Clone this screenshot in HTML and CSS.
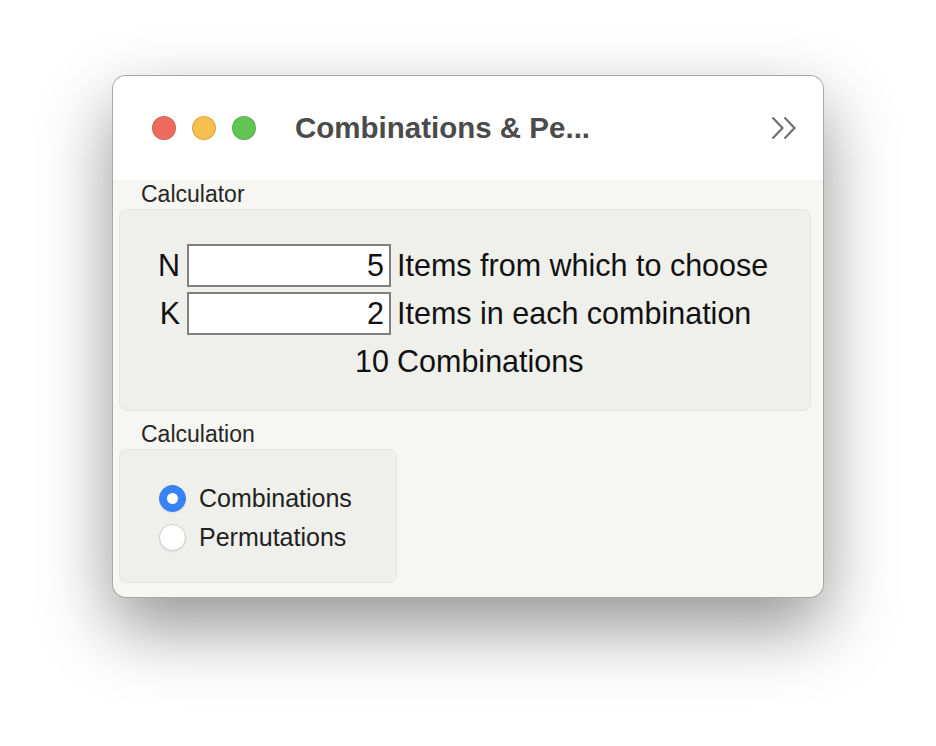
FILE: index.html
```html
<html>
  <head>
    <title>Combinations &amp; Permutations</title>
    <meta name="viewport" content="width=device-width, initial-scale=1.0" />
    <link rel="stylesheet" href="styles.css">
  </head>
  <body>
    <div class="window">
      <div class="titlebar">
        <div class="lights">
          <span class="light close"></span>
          <span class="light min"></span>
          <span class="light zoom"></span>
        </div>
        <div class="title">Combinations &amp; Pe...</div>
        <svg class="more" width="26" height="24" viewBox="0 0 26 24">
          <path d="M1.5 1.5 L11.5 12 L1.5 22.5" />
          <path d="M13.5 1.5 L23.5 12 L13.5 22.5" />
        </svg>
      </div>
      <div class="content">
        <div class="group-label">Calculator</div>
        <div class="box calc">
          <div class="row">
            <span class="var">N</span>
            <input class="field" type="text" value="5" />
            <span class="desc">Items from which to choose</span>
          </div>
          <div class="row">
            <span class="var">K</span>
            <input class="field" type="text" value="2" />
            <span class="desc">Items in each combination</span>
          </div>
          <div class="row">
            <span class="result">10</span>
            <span class="desc">Combinations</span>
          </div>
        </div>
        <div class="group-label second">Calculation</div>
        <div class="box kind">
          <label class="radio-row">
            <span class="radio checked"></span>
            <span>Combinations</span>
          </label>
          <label class="radio-row">
            <span class="radio"></span>
            <span>Permutations</span>
          </label>
        </div>
      </div>
    </div>
  </body>
</html>
```

FILE: styles.css
```css
body {
  margin: 0;
  padding: 75px 0 0 112px;
  background: #fff;
  font-family: "Liberation Sans", Arial, sans-serif;
  color: #111;
}
.window {
  width: 712px;
  height: 523px;
  box-sizing: border-box;
  border: 1px solid rgba(0, 0, 0, 0.32);
  border-radius: 14px;
  background: #f6f6f2;
  box-shadow: 0 30px 70px rgba(0, 0, 0, 0.42);
  overflow: hidden;
}
.titlebar {
  height: 104px;
  background: #fff;
  display: flex;
  align-items: center;
  padding: 0 26px 0 39px;
}
.lights {
  display: flex;
  gap: 16px;
}
.light {
  width: 24px;
  height: 24px;
  box-sizing: border-box;
  border-radius: 50%;
  border: 1px solid rgba(0, 0, 0, 0.12);
}
.close {
  background: #ee6a5f;
}
.min {
  background: #f5bf4f;
}
.zoom {
  background: #61c554;
}
.title {
  margin-left: 39px;
  font-size: 29.5px;
  font-weight: bold;
  color: #4b4b4b;
  flex: 1;
}
.more {
  fill: none;
  stroke: #707070;
  stroke-width: 2.2;
}
.content {
  padding: 2px 12px 0 6px;
}
.group-label {
  font-size: 23px;
  line-height: 24px;
  color: #262626;
  padding-left: 22px;
  margin-bottom: 3px;
}
.group-label.second {
  margin-top: 11px;
}
.box {
  background: #efefeb;
  border: 1px solid #e3e3df;
  border-radius: 8px;
  box-sizing: border-box;
}
.calc {
  height: 202px;
  padding: 31px 0 0 21px;
}
.row {
  display: grid;
  grid-template-columns: 40px 204px auto;
  column-gap: 6px;
  align-items: center;
  height: 48px;
  font-size: 30.5px;
}
.var {
  text-align: right;
  padding-right: 1px;
}
.field {
  width: 204px;
  height: 43px;
  box-sizing: border-box;
  border: 2px solid #808080;
  background: #fff;
  font: inherit;
  font-size: 30.5px;
  color: #111;
  text-align: right;
  padding: 0 5px 0 0;
  outline: none;
}
.result {
  grid-column: 1 / span 2;
  text-align: right;
  padding-right: 2px;
}
.desc {
  white-space: nowrap;
}
.kind {
  width: 278px;
  height: 134px;
  padding: 29px 0 0 39px;
}
.radio-row {
  display: flex;
  align-items: center;
  gap: 13px;
  height: 39px;
  font-size: 25px;
  color: #222;
}
.radio {
  width: 27px;
  height: 27px;
  box-sizing: border-box;
  border-radius: 50%;
  background: #fff;
  border: 1px solid #cdcdcd;
  box-shadow: 0 1px 2px rgba(0, 0, 0, 0.08);
  display: flex;
  align-items: center;
  justify-content: center;
}
.radio.checked {
  background: #3a82f7;
  border-color: #3479ee;
}
.radio.checked::after {
  content: "";
  width: 11px;
  height: 11px;
  border-radius: 50%;
  background: #fff;
}
```
